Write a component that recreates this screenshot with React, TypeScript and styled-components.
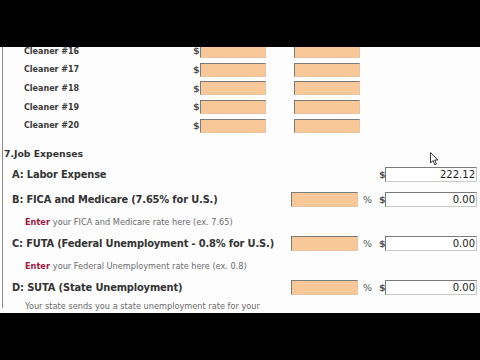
import React from "react";
import styled, { createGlobalStyle } from "styled-components";

const Global = createGlobalStyle`
  html, body { margin: 0; padding: 0; background: #000; }
  body { font-family: "DejaVu Sans", Verdana, sans-serif; }
`;

const Frame = styled.div`
  position: relative;
  width: 480px;
  height: 360px;
  display: flex;
  flex-direction: column;
  background: #000;
  overflow: hidden;
`;

const Bar = styled.div`
  height: 47px;
  flex: none;
  background: #000;
`;

const Viewport = styled.div`
  height: 266px;
  flex: none;
  background: #fdfdfd;
  padding-left: 2px;
  overflow: hidden;
`;

const Panel = styled.div`
  height: 100%;
  border-left: 1px solid #8c8c8c;
  padding-right: 3px;
`;

const Scroller = styled.div`
  margin-top: -5.35px;
  display: flex;
  flex-direction: column;
`;

const CleanerRow = styled.div`
  height: 18.7px;
  display: flex;
  align-items: center;
  padding-left: 21px;
`;

const CleanerLabel = styled.span`
  width: 169px;
  font-size: 8px;
  font-weight: bold;
  color: #3a3a3a;
`;

const Sign = styled.span<{ $w?: number }>`
  width: ${(p) => p.$w ?? 7}px;
  font-size: 9.5px;
  font-weight: bold;
  color: #555;
  line-height: 1;
`;

const Field = styled.div<{ $w: number; $h: number; $tone: "peach" | "white"; $ml?: number }>`
  box-sizing: border-box;
  width: ${(p) => p.$w}px;
  height: ${(p) => p.$h}px;
  margin-left: ${(p) => p.$ml ?? 0}px;
  background: ${(p) => (p.$tone === "peach" ? "#f9c899" : "#ffffff")};
  border: 1px solid ${(p) => (p.$tone === "peach" ? "#e8c4a0" : "#c8c8c8")};
  border-top-color: #7a7a7a;
  border-left-color: #7a7a7a;
  display: flex;
  align-items: center;
  justify-content: flex-end;
  padding-right: 1px;
  font-size: 10px;
  color: #1a1a1a;
`;

const Heading = styled.div`
  height: 20px;
  margin-top: 8.85px;
  display: flex;
  align-items: center;
  padding-left: 1px;
  font-size: 9.3px;
  font-weight: bold;
  color: #333;
`;

const FieldRow = styled.div<{ $mb?: number }>`
  height: 22px;
  margin-bottom: ${(p) => p.$mb ?? 0}px;
  display: flex;
  align-items: center;
  padding-left: 9px;
`;

const FieldLabel = styled.span`
  flex: 1;
  font-size: 9.9px;
  letter-spacing: -0.15px;
  font-weight: bold;
  color: #333;
  white-space: nowrap;
`;

const Pct = styled.span`
  width: 21px;
  padding-left: 5px;
  box-sizing: border-box;
  font-size: 9.5px;
  color: #555;
`;

const Help = styled.div<{ $h?: number }>`
  height: ${(p) => p.$h ?? 22}px;
  display: flex;
  align-items: center;
  padding-left: 22px;
  font-size: 8.2px;
  color: #6a6a6a;
  white-space: nowrap;
`;

const Enter = styled.span`
  color: #a3173d;
  font-weight: bold;
`;

const Cursor = styled.svg`
  position: absolute;
  left: 430px;
  top: 152px;
`;

const cleaners = [16, 17, 18, 19, 20];

const rows = [
  {
    label: "B: FICA and Medicare (7.65% for U.S.)",
    help: "your FICA and Medicare rate here (ex. 7.65)",
    enter: true,
    h: 22,
  },
  {
    label: "C: FUTA (Federal Unemployment - 0.8% for U.S.)",
    help: "your Federal Unemployment rate here (ex. 0.8)",
    enter: true,
    h: 22,
  },
  {
    label: "D: SUTA (State Unemployment)",
    help: "Your state sends you a state unemployment rate for your",
    enter: false,
    h: 14,
  },
];

export default function App() {
  return (
    <Frame>
      <Global />
      <Bar />
      <Viewport>
        <Panel>
          <Scroller>
            {cleaners.map((n) => (
              <CleanerRow key={n}>
                <CleanerLabel>Cleaner #{n}</CleanerLabel>
                <Sign>$</Sign>
                <Field $w={66} $h={14} $tone="peach" />
                <Field $w={66} $h={14} $tone="peach" $ml={28} />
              </CleanerRow>
            ))}
            <Heading>7.Job Expenses</Heading>
            <FieldRow $mb={3}>
              <FieldLabel>A: Labor Expense</FieldLabel>
              <Sign $w={6}>$</Sign>
              <Field $w={92} $h={15} $tone="white">222.12</Field>
            </FieldRow>
            {rows.map((r) => (
              <React.Fragment key={r.label}>
                <FieldRow>
                  <FieldLabel>{r.label}</FieldLabel>
                  <Field $w={67} $h={15} $tone="peach" />
                  <Pct>%</Pct>
                  <Sign $w={6}>$</Sign>
                  <Field $w={92} $h={15} $tone="white">0.00</Field>
                </FieldRow>
                <Help $h={r.h}>
                  {r.enter && <Enter>Enter&nbsp;</Enter>}
                  {r.help}
                </Help>
              </React.Fragment>
            ))}
          </Scroller>
        </Panel>
      </Viewport>
      <Bar />
      <Cursor width="9" height="14" viewBox="0 0 9 14">
        <path d="M0.5 0.5 L0.5 11 L3 8.5 L4.8 12.8 L6.4 12.1 L4.7 8 L8 8 Z" fill="#fff" stroke="#222" strokeWidth="0.9" strokeLinejoin="round" />
      </Cursor>
    </Frame>
  );
}
